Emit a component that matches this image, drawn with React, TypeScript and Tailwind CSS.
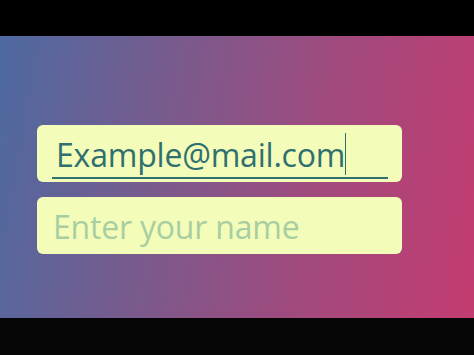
import React from "react";

export default function App() {
  return (
    <div className="flex h-[355px] w-[474px] flex-col bg-black" style={{ fontFamily: '"Open Sans", "Noto Sans", sans-serif' }}>
      {/* letterbox top */}
      <div className="h-[36px] shrink-0 bg-black" />

      {/* gradient stage */}
      <div className="flex h-[282px] shrink-0 flex-col gap-[15px] bg-[linear-gradient(100deg,#4d6aa1_0%,#7a5a8c_35%,#a04a7e_65%,#c43c70_100%)] pl-[37px] pt-[89px]">
        {/* email field, focused */}
        <div className="relative h-[57px] w-[365px] rounded-[6px] bg-[#f3fdb9]">
          <span className="absolute left-[19px] top-[10px] whitespace-nowrap text-[32px] leading-[40px] tracking-[-0.2px] text-[#2f6f70]">
            Example@mail.com
          </span>
          <span className="absolute left-[308px] top-[8px] h-[42px] w-[1px] bg-[#2f6f70]" />
          <span className="absolute left-[15px] top-[52px] h-[2px] w-[336px] bg-[#2f7070]" />
        </div>

        {/* name field, placeholder */}
        <div className="relative h-[57px] w-[365px] rounded-[6px] bg-[#f3fdb9]">
          <span className="absolute left-[16px] top-[10px] whitespace-nowrap text-[32px] leading-[40px] tracking-[-0.2px] text-[#a9cea2]">
            Enter your name
          </span>
        </div>
      </div>

      {/* letterbox bottom */}
      <div className="flex-1 bg-[#050505]" />
    </div>
  );
}
